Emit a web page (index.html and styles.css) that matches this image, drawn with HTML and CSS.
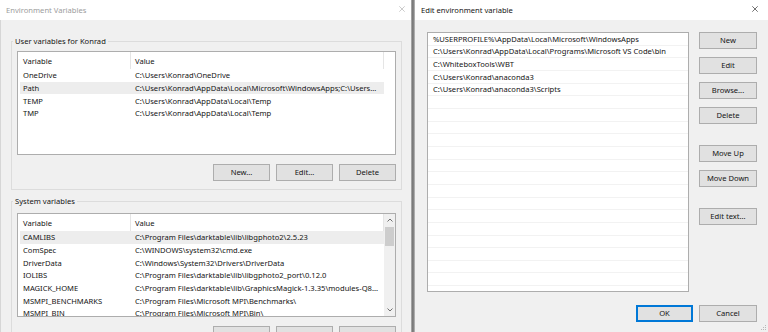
FILE: index.html
```html
<!DOCTYPE html>
<html>
<head>
<meta charset="utf-8">
<link rel="stylesheet" href="styles.css">
</head>
<body>
<div class="screen">
  <div class="win win-back">
    <div class="titlebar">
      <span class="title inactive">Environment Variables</span>
      <svg class="close close-back" width="6" height="6" viewBox="0 0 6 6"><path d="M0.3 0.3L5.7 5.7M5.7 0.3L0.3 5.7" stroke="#b4b4b4" stroke-width="0.7" fill="none"/></svg>
    </div>
    <div class="body-back">
      <fieldset class="group g1">
        <legend>User variables for Konrad</legend>
        <div class="list">
          <div class="table">
            <div class="hdr"><div class="hc c1">Variable</div><div class="hc c2">Value</div></div>
            <div class="row"><span class="c1">OneDrive</span><span class="c2">C:\Users\Konrad\OneDrive</span></div>
            <div class="row sel"><span class="c1">Path</span><span class="c2">C:\Users\Konrad\AppData\Local\Microsoft\WindowsApps;C:\Users...</span></div>
            <div class="row"><span class="c1">TEMP</span><span class="c2">C:\Users\Konrad\AppData\Local\Temp</span></div>
            <div class="row"><span class="c1">TMP</span><span class="c2">C:\Users\Konrad\AppData\Local\Temp</span></div>
          </div>
        </div>
        <div class="btnrow">
          <button class="btn">New...</button>
          <button class="btn">Edit...</button>
          <button class="btn">Delete</button>
        </div>
      </fieldset>
      <fieldset class="group g2">
        <legend>System variables</legend>
        <div class="list">
          <div class="table">
            <div class="hdr"><div class="hc c1">Variable</div><div class="hc c2">Value</div></div>
            <div class="row sel"><span class="c1">CAMLIBS</span><span class="c2">C:\Program Files\darktable\lib\libgphoto2\2.5.23</span></div>
            <div class="row"><span class="c1">ComSpec</span><span class="c2">C:\WINDOWS\system32\cmd.exe</span></div>
            <div class="row"><span class="c1">DriverData</span><span class="c2">C:\Windows\System32\Drivers\DriverData</span></div>
            <div class="row"><span class="c1">IOLIBS</span><span class="c2">C:\Program Files\darktable\lib\libgphoto2_port\0.12.0</span></div>
            <div class="row"><span class="c1">MAGICK_HOME</span><span class="c2">C:\Program Files\darktable\lib\GraphicsMagick-1.3.35\modules-Q8...</span></div>
            <div class="row"><span class="c1">MSMPI_BENCHMARKS</span><span class="c2">C:\Program Files\Microsoft MPI\Benchmarks\</span></div>
            <div class="row"><span class="c1">MSMPI_BIN</span><span class="c2">C:\Program Files\Microsoft MPI\Bin\</span></div>
          </div>
          <div class="vscroll">
            <div class="arrow"><svg width="6" height="4" viewBox="0 0 6 4"><path d="M0.5 3.5L3 1L5.5 3.5" stroke="#606060" stroke-width="0.9" fill="none"/></svg></div>
            <div class="track"><div class="thumb"></div></div>
            <div class="arrow"><svg width="6" height="4" viewBox="0 0 6 4"><path d="M0.5 0.5L3 3L5.5 0.5" stroke="#606060" stroke-width="0.9" fill="none"/></svg></div>
          </div>
        </div>
        <div class="btnrow">
          <button class="btn">New...</button>
          <button class="btn">Edit...</button>
          <button class="btn">Delete</button>
        </div>
      </fieldset>
    </div>
  </div>
  <div class="divider"></div>
  <div class="win win-front">
    <div class="titlebar">
      <span class="title">Edit environment variable</span>
      <svg class="close close-front" width="6" height="6" viewBox="0 0 6 6"><path d="M0.3 0.3L5.7 5.7M5.7 0.3L0.3 5.7" stroke="#333" stroke-width="0.7" fill="none"/></svg>
    </div>
    <div class="body-front">
      <div class="top">
        <div class="plist">
          <div class="prow">%USERPROFILE%\AppData\Local\Microsoft\WindowsApps</div>
          <div class="prow">C:\Users\Konrad\AppData\Local\Programs\Microsoft VS Code\bin</div>
          <div class="prow">C:\WhiteboxTools\WBT</div>
          <div class="prow">C:\Users\Konrad\anaconda3</div>
          <div class="prow">C:\Users\Konrad\anaconda3\Scripts</div>
          <div class="prow"></div><div class="prow"></div><div class="prow"></div>
          <div class="prow"></div><div class="prow"></div><div class="prow"></div>
          <div class="prow"></div><div class="prow"></div><div class="prow"></div>
          <div class="prow"></div><div class="prow"></div><div class="prow"></div>
          <div class="prow"></div><div class="prow"></div><div class="prow"></div>
          <div class="prow"></div>
        </div>
        <div class="btncol">
          <div class="bgroup">
            <button class="btn wide">New</button>
            <button class="btn wide">Edit</button>
            <button class="btn wide">Browse...</button>
            <button class="btn wide">Delete</button>
          </div>
          <div class="bgroup">
            <button class="btn wide">Move Up</button>
            <button class="btn wide">Move Down</button>
          </div>
          <div class="bgroup">
            <button class="btn wide">Edit text...</button>
          </div>
        </div>
      </div>
      <div class="bottom">
        <button class="btn default">OK</button>
        <button class="btn wide">Cancel</button>
      </div>
    </div>
    <svg class="grip" width="7" height="7" viewBox="0 0 7 7"><g fill="#b8b8b8"><rect x="5" y="1" width="1" height="1"/><rect x="3" y="3" width="1" height="1"/><rect x="5" y="3" width="1" height="1"/><rect x="1" y="5" width="1" height="1"/><rect x="3" y="5" width="1" height="1"/><rect x="5" y="5" width="1" height="1"/></g></svg>
  </div>
</div>
</body>
</html>
```

FILE: styles.css
```css
* { box-sizing: border-box; }
html, body { margin: 0; padding: 0; }
body {
  width: 768px;
  height: 332px;
  overflow: hidden;
  background: #f0f0f0;
  font-family: "Noto Sans", "Open Sans", sans-serif;
  font-size: 7.6px;
  color: #141414;
}
.screen { display: flex; height: 332px; }

.win { display: flex; flex-direction: column; background: #f0f0f0; height: 332px; position: relative; overflow: hidden; }
.win-back { width: 411px; }
.win-front { flex: 1; }

.titlebar {
  height: 20px;
  flex: none;
  background: #fff;
  display: flex;
  align-items: center;
  justify-content: space-between;
  padding-left: 6px;
}
.title { line-height: 12px; }
.title.inactive { color: #9c9c9c; }
.close-back { margin-right: 6px; margin-top: -2px; }
.close-front { margin-right: 10px; margin-top: -3px; }

.body-back { flex: 1; box-shadow: inset 1px 0 #d6d6d6; }

.group {
  margin: 0 9px 0 11px;
  border: 1px solid #dcdcdc;
  padding: 4px 5px 8px 5px;
  min-width: 0;
}
.g1 { margin-top: 15px; }
.g2 { margin-top: 5px; padding-top: 6px; }
.group legend {
  padding: 0 2px;
  margin-left: -4px;
  line-height: 12px;
  color: #141414;
}

.list {
  height: 104px;
  background: #fff;
  border: 1px solid #adadad;
  display: flex;
  overflow: hidden;
}
.table { width: 366px; flex: none; }
.hdr { display: flex; height: 17px; align-items: stretch; }
.hc { display: flex; align-items: center; border-right: 1px solid #e5e5e5; }
.hdr .c1 { width: 113px; padding-left: 5px; }
.hdr .c2 { width: 253px; padding-left: 4px; }
.row {
  display: flex;
  height: 12.667px;
  align-items: center;
  margin-left: 2px;
  white-space: nowrap;
}
.row.sel { background: #ededed; }
.row .c1 { width: 112px; padding-left: 3px; flex: none; }
.row .c2 { flex: 1; padding-left: 3px; overflow: hidden; }

.vscroll {
  width: 11px;
  flex: none;
  display: flex;
  flex-direction: column;
  background: #f0f0f0;
}
.arrow { height: 12px; display: flex; align-items: center; justify-content: center; flex: none; }
.track { flex: 1; padding: 1px 1px 0 1px; }
.thumb { height: 19px; background: #cdcdcd; }

.btnrow { display: flex; justify-content: flex-end; gap: 6px; margin-top: 9px; }
.btn {
  font-family: inherit;
  font-size: 7.6px;
  color: #141414;
  background: #e1e1e1;
  border: 1px solid #adadad;
  height: 17px;
  width: 57px;
  padding: 0;
  margin: 0;
  line-height: 15px;
}
.btn.wide { width: 58px; }
.btn.default { border-color: #0078d7; box-shadow: inset 0 0 0 1px #0078d7; width: 57px; }

.divider {
  width: 4px;
  flex: none;
  background: linear-gradient(to right, #b9b9b9, #7a7a7a 35%, #858585 70%, #c9c9c9);
}

.body-front { flex: 1; padding: 12px 11px 0 12px; display: flex; flex-direction: column; }
.top { display: flex; gap: 10px; height: 260px; }
.plist {
  width: 262px;
  height: 260px;
  background: #fff;
  border: 1px solid #adadad;
  overflow: hidden;
}
.prow {
  height: 12.667px;
  border-bottom: 1px solid #f2f2f2;
  padding-left: 5px;
  display: flex;
  align-items: center;
  white-space: nowrap;
}
.btncol { display: flex; flex-direction: column; gap: 21px; }
.bgroup { display: flex; flex-direction: column; gap: 8px; }
.bottom { display: flex; justify-content: flex-end; gap: 6px; margin-top: 13px; }
.grip { position: absolute; right: 1px; bottom: 1px; }
```
